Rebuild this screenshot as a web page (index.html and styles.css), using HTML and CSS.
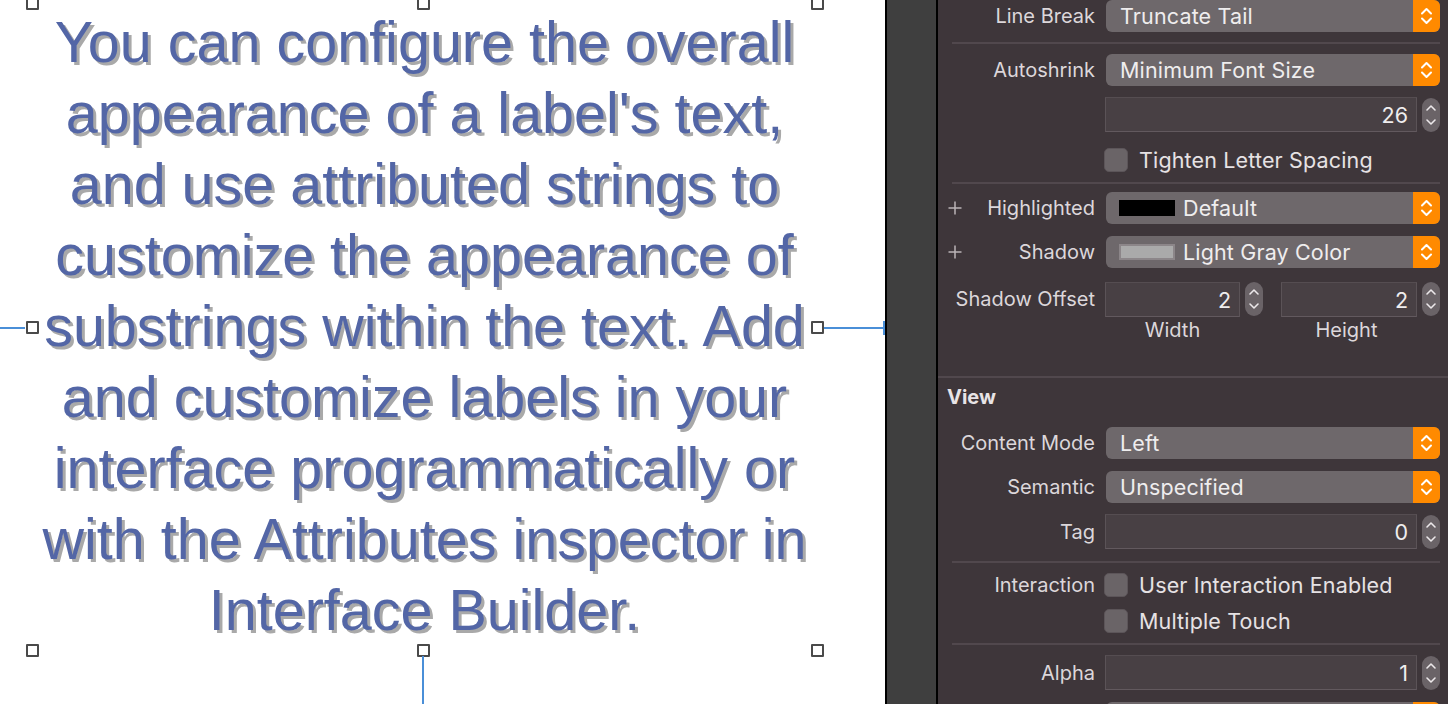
FILE: index.html
```html
<!DOCTYPE html>
<html lang="en">
<head>
<meta charset="utf-8">
<title>Label Attributes</title>
<link rel="stylesheet" href="styles.css">
</head>
<body>
<div class="app">
  <main class="canvas">
    <div class="label-box">
      <p class="label-text">You can configure the overall<br>appearance of a label's text,<br>and use attributed strings to<br>customize the appearance of<br>substrings within the text. Add<br>and customize labels in your<br>interface programmatically or<br>with the Attributes inspector in<br>Interface Builder.</p>
      <span class="handle h-tl"></span>
      <span class="handle h-tc"></span>
      <span class="handle h-tr"></span>
      <span class="handle h-ml"></span>
      <span class="handle h-mr"></span>
      <span class="handle h-bl"></span>
      <span class="handle h-bc"></span>
      <span class="handle h-br"></span>
      <span class="cline c-left"></span>
      <span class="cline c-right"></span>
      <span class="cline c-right-tick"></span>
      <span class="cline c-bottom"></span>
    </div>
  </main>
  <div class="gutter"></div>
  <aside class="inspector">
    <div class="row r-linebreak">
      <span class="lbl">Line Break</span>
      <div class="popup"><span class="pv">Truncate Tail</span><span class="pa"><svg width="27" height="32" viewBox="0 0 27 32"><path d="M9 13.5 L13.5 9 L18 13.5 M9 18.5 L13.5 23 L18 18.5" fill="none" stroke="#fff" stroke-width="2" stroke-linecap="round" stroke-linejoin="round"/></svg></span></div>
    </div>
    <div class="sep s1"></div>
    <div class="row r-autoshrink">
      <span class="lbl">Autoshrink</span>
      <div class="popup"><span class="pv">Minimum Font Size</span><span class="pa"><svg width="27" height="32" viewBox="0 0 27 32"><path d="M9 13.5 L13.5 9 L18 13.5 M9 18.5 L13.5 23 L18 18.5" fill="none" stroke="#fff" stroke-width="2" stroke-linecap="round" stroke-linejoin="round"/></svg></span></div>
    </div>
    <div class="row r-minsize">
      <span class="lbl"></span>
      <div class="numctl">
        <div class="field">26</div>
        <span class="stepper"><svg width="18" height="34" viewBox="0 0 18 34"><path d="M5 12 L9 8 L13 12 M5 22 L9 26 L13 22" fill="none" stroke="#ece8ea" stroke-width="1.6" stroke-linecap="round" stroke-linejoin="round"/></svg></span>
      </div>
    </div>
    <div class="row r-tighten">
      <span class="lbl"></span>
      <label class="check"><span class="box"></span><span class="ct">Tighten Letter Spacing</span></label>
    </div>
    <div class="sep s2"></div>
    <div class="row r-highlighted">
      <span class="lbl lbl-plus"><svg class="plus" width="16" height="16" viewBox="0 0 16 16"><path d="M8 1.5 V14.5 M1.5 8 H14.5" stroke="#bab4b7" stroke-width="1.5"/></svg><span>Highlighted</span></span>
      <div class="popup"><span class="swatch sw-black"></span><span class="pv pv-sw">Default</span><span class="pa"><svg width="27" height="32" viewBox="0 0 27 32"><path d="M9 13.5 L13.5 9 L18 13.5 M9 18.5 L13.5 23 L18 18.5" fill="none" stroke="#fff" stroke-width="2" stroke-linecap="round" stroke-linejoin="round"/></svg></span></div>
    </div>
    <div class="row r-shadow">
      <span class="lbl lbl-plus"><svg class="plus" width="16" height="16" viewBox="0 0 16 16"><path d="M8 1.5 V14.5 M1.5 8 H14.5" stroke="#bab4b7" stroke-width="1.5"/></svg><span>Shadow</span></span>
      <div class="popup"><span class="swatch sw-gray"></span><span class="pv pv-sw">Light Gray Color</span><span class="pa"><svg width="27" height="32" viewBox="0 0 27 32"><path d="M9 13.5 L13.5 9 L18 13.5 M9 18.5 L13.5 23 L18 18.5" fill="none" stroke="#fff" stroke-width="2" stroke-linecap="round" stroke-linejoin="round"/></svg></span></div>
    </div>
    <div class="row r-offset">
      <span class="lbl">Shadow Offset</span>
      <div class="pair">
        <div class="field">2</div>
        <span class="stepper"><svg width="18" height="34" viewBox="0 0 18 34"><path d="M5 12 L9 8 L13 12 M5 22 L9 26 L13 22" fill="none" stroke="#ece8ea" stroke-width="1.6" stroke-linecap="round" stroke-linejoin="round"/></svg></span>
        <div class="field field-2">2</div>
        <span class="stepper"><svg width="18" height="34" viewBox="0 0 18 34"><path d="M5 12 L9 8 L13 12 M5 22 L9 26 L13 22" fill="none" stroke="#ece8ea" stroke-width="1.6" stroke-linecap="round" stroke-linejoin="round"/></svg></span>
      </div>
    </div>
    <div class="row r-sublabels">
      <span class="lbl"></span>
      <div class="pair pair-labels"><span>Width</span><span></span><span class="field-2">Height</span><span></span></div>
    </div>
    <div class="sep-full"></div>
    <div class="section-title">View</div>
    <div class="row r-content">
      <span class="lbl">Content Mode</span>
      <div class="popup"><span class="pv">Left</span><span class="pa"><svg width="27" height="32" viewBox="0 0 27 32"><path d="M9 13.5 L13.5 9 L18 13.5 M9 18.5 L13.5 23 L18 18.5" fill="none" stroke="#fff" stroke-width="2" stroke-linecap="round" stroke-linejoin="round"/></svg></span></div>
    </div>
    <div class="row r-semantic">
      <span class="lbl">Semantic</span>
      <div class="popup"><span class="pv">Unspecified</span><span class="pa"><svg width="27" height="32" viewBox="0 0 27 32"><path d="M9 13.5 L13.5 9 L18 13.5 M9 18.5 L13.5 23 L18 18.5" fill="none" stroke="#fff" stroke-width="2" stroke-linecap="round" stroke-linejoin="round"/></svg></span></div>
    </div>
    <div class="row r-tag">
      <span class="lbl">Tag</span>
      <div class="numctl">
        <div class="field">0</div>
        <span class="stepper"><svg width="18" height="34" viewBox="0 0 18 34"><path d="M5 12 L9 8 L13 12 M5 22 L9 26 L13 22" fill="none" stroke="#ece8ea" stroke-width="1.6" stroke-linecap="round" stroke-linejoin="round"/></svg></span>
      </div>
    </div>
    <div class="sep s3"></div>
    <div class="row r-interaction">
      <span class="lbl">Interaction</span>
      <label class="check"><span class="box"></span><span class="ct">User Interaction Enabled</span></label>
    </div>
    <div class="row r-touch">
      <span class="lbl"></span>
      <label class="check"><span class="box"></span><span class="ct">Multiple Touch</span></label>
    </div>
    <div class="sep s4"></div>
    <div class="row r-alpha">
      <span class="lbl">Alpha</span>
      <div class="numctl">
        <div class="field">1</div>
        <span class="stepper"><svg width="18" height="34" viewBox="0 0 18 34"><path d="M5 12 L9 8 L13 12 M5 22 L9 26 L13 22" fill="none" stroke="#ece8ea" stroke-width="1.6" stroke-linecap="round" stroke-linejoin="round"/></svg></span>
      </div>
    </div>
    <div class="row r-next">
      <span class="lbl"></span>
      <div class="popup"><span class="pv"></span><span class="pa"></span></div>
    </div>
  </aside>
</div>
</body>
</html>
```

FILE: styles.css
```css
* { box-sizing: border-box; }
html, body { margin: 0; padding: 0; }
body {
  width: 1448px;
  height: 704px;
  overflow: hidden;
  background: #3e363a;
}
.app {
  display: flex;
  width: 1448px;
  height: 704px;
  overflow: hidden;
}

/* ---------- canvas ---------- */
.canvas {
  width: 885px;
  flex: none;
  height: 704px;
  background: #ffffff;
  padding: 3px 0 0 32px;
  overflow: hidden;
}
.label-box {
  position: relative;
  width: 785px;
  height: 647px;
  display: flex;
  align-items: center;
  justify-content: center;
}
.label-text {
  margin: 0;
  font-family: "Liberation Sans", Arial, sans-serif;
  font-size: 57.5px;
  line-height: 71px;
  color: #5366a6;
  text-align: center;
  white-space: nowrap;
  text-shadow: 3px 3px 0 #a9a9a9;
}
.handle {
  position: absolute;
  width: 13px;
  height: 13px;
  margin: -6px 0 0 -6px;
  background: #fff;
  border: 2px solid #4a4a4a;
  border-radius: 1px;
}
.h-tl { left: 0; top: 0; }
.h-tc { left: 391px; top: 0; }
.h-tr { left: 785px; top: 0; }
.h-ml { left: 0; top: 324px; }
.h-mr { left: 785px; top: 324px; }
.h-bl { left: 0; top: 647px; }
.h-bc { left: 391px; top: 647px; }
.h-br { left: 785px; top: 647px; }
.cline {
  position: absolute;
  background: #4a8fd8;
}
.c-left { left: -40px; top: 324px; width: 33px; height: 2px; }
.c-right { left: 792px; top: 324px; width: 60px; height: 2px; }
.c-right-tick { left: 851px; top: 318px; width: 2px; height: 14px; }
.c-bottom { left: 390px; top: 653px; width: 2px; height: 60px; }

/* ---------- gutter ---------- */
.gutter {
  flex: none;
  width: 53px;
  height: 704px;
  background: #3f3f3f;
  border-left: 2px solid #000;
  border-right: 2px solid #000;
}

/* ---------- inspector ---------- */
.inspector {
  flex: 1;
  height: 704px;
  overflow: hidden;
  background: #3e363a;
  padding: 0 8px 0 8px;
  display: flex;
  flex-direction: column;
  font-family: Inter, "Noto Sans", sans-serif;
  font-size: 20px;
  color: #ddd9db;
}
.row {
  flex: none;
  display: grid;
  grid-template-columns: 149px 1fr;
  column-gap: 10px;
  align-items: center;
}
.lbl {
  text-align: right;
  white-space: nowrap;
  color: #dcd7da;
}
.lbl-plus {
  display: flex;
  align-items: center;
  justify-content: space-between;
}
.plus { margin-left: 1px; }

.popup {
  height: 32px;
  margin-left: 1px;
  display: flex;
  align-items: center;
  background: #6e686b;
  border-radius: 6px;
  overflow: hidden;
}
.pv {
  flex: 1;
  padding-left: 14px;
  color: #efedee;
  font-size: 21.5px;
  letter-spacing: 0.15px;
  white-space: nowrap;
}
.pv-sw { padding-left: 8px; }
.pa {
  flex: none;
  width: 27px;
  height: 32px;
  background: #ff8a00;
  display: flex;
}
.swatch {
  flex: none;
  width: 56px;
  height: 16px;
  margin-left: 13px;
}
.sw-black { background: #000; }
.sw-gray { background: #aaaaaa; border: 2px solid #8c8689; }

.numctl {
  display: grid;
  grid-template-columns: 1fr 18px;
  column-gap: 5px;
  align-items: center;
}
.field {
  height: 35px;
  background: #484044;
  border: 1px solid #5b5357;
  border-top-color: #554d51;
  border-bottom-color: #62595e;
  text-align: right;
  padding-right: 8px;
  line-height: 35px;
  font-size: 21.5px;
  color: #efedee;
}
.stepper {
  width: 18px;
  height: 34px;
  background: #6a6367;
  border-radius: 9px;
  display: flex;
}
.pair {
  display: grid;
  grid-template-columns: 135px 18px 1fr 18px;
  column-gap: 5px;
  align-items: center;
}
.pair .field-2 { margin-left: 13px; }
.pair-labels {
  font-size: 20px;
  color: #dcd7da;
}
.pair-labels span { text-align: center; white-space: nowrap; }
.pair-labels .field-2 { margin-left: 8px; }

.check {
  display: flex;
  align-items: center;
  height: 24px;
  margin-left: -1px;
}
.box {
  flex: none;
  width: 24px;
  height: 24px;
  border-radius: 5px;
  background: #6a6467;
  border: 1px solid #5c5559;
}
.ct {
  margin-left: 11px;
  font-size: 21.5px;
  letter-spacing: 0.15px;
  color: #e6e2e4;
  white-space: nowrap;
}

.sep {
  flex: none;
  height: 2px;
  margin-left: 6px;
  background: #51484d;
}
.sep-full {
  flex: none;
  height: 2px;
  margin-left: -8px;
  margin-right: -8px;
  background: #51484d;
}
.section-title {
  flex: none;
  height: 24px;
  line-height: 24px;
  font-weight: 700;
  font-size: 20px;
  color: #e8e4e6;
  padding-left: 1px;
}

/* vertical rhythm */
.r-linebreak { height: 32px; margin-top: 0; }
.s1 { margin-top: 10px; }
.r-autoshrink { height: 32px; margin-top: 10px; }
.r-minsize { height: 35px; margin-top: 11px; }
.r-tighten { height: 24px; margin-top: 16px; }
.s2 { margin-top: 10px; }
.r-highlighted { height: 32px; margin-top: 8px; }
.r-shadow { height: 32px; margin-top: 12px; }
.r-offset { height: 36px; margin-top: 13px; }
.r-sublabels { height: 24px; margin-top: 1px; }
.sep-full { margin-top: 34px; }
.section-title { margin-top: 7px; }
.r-content { height: 32px; margin-top: 18px; }
.r-semantic { height: 32px; margin-top: 12px; }
.r-tag { height: 35px; margin-top: 11px; }
.s3 { margin-top: 12px; }
.r-interaction { height: 24px; margin-top: 10px; }
.r-touch { height: 24px; margin-top: 12px; }
.s4 { margin-top: 10px; }
.r-alpha { height: 35px; margin-top: 10px; }
.r-next { height: 32px; margin-top: 12px; }
```
